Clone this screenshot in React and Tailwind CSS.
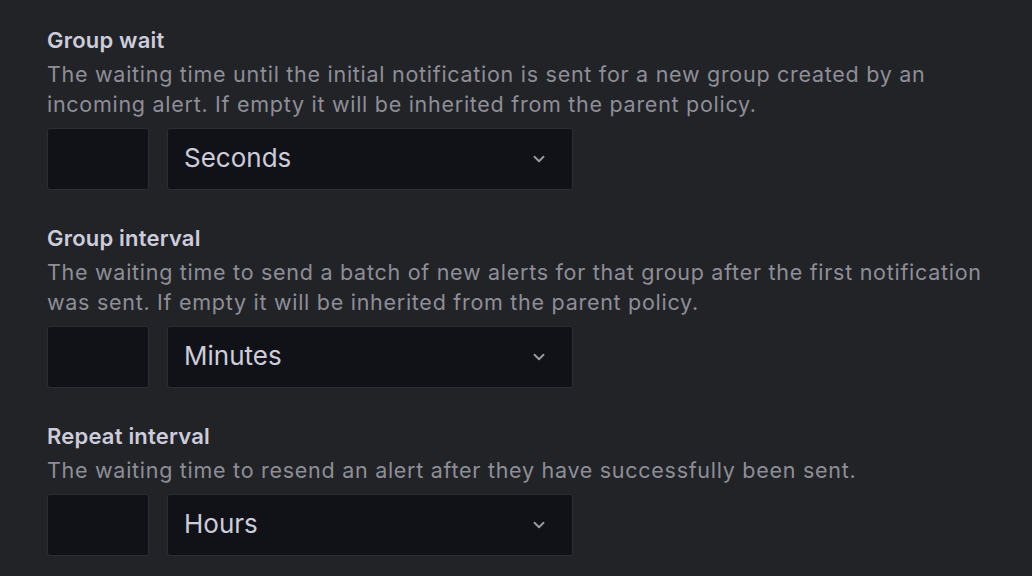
import React from 'react';
import { ChevronDown } from 'lucide-react';

const fields = [
  {
    label: 'Group wait',
    description:
      'The waiting time until the initial notification is sent for a new group created by an incoming alert. If empty it will be inherited from the parent policy.',
    unit: 'Seconds',
  },
  {
    label: 'Group interval',
    description:
      'The waiting time to send a batch of new alerts for that group after the first notification was sent. If empty it will be inherited from the parent policy.',
    unit: 'Minutes',
  },
  {
    label: 'Repeat interval',
    description: 'The waiting time to resend an alert after they have successfully been sent.',
    unit: 'Hours',
  },
];

const TimingField = ({ label, description, unit }) => (
  <div className="flex flex-col">
    <label className="text-[22px] leading-[26px] font-semibold tracking-[0.2px] text-[#ccccdc]">{label}</label>
    <p className="mt-[6px] text-[21.5px] leading-[30px] tracking-[0.72px] text-[#8e8e98]">{description}</p>
    <div className="mt-[9px] flex gap-[18px]">
      <input
        className="w-[102px] h-[62px] rounded-[3px] border border-[#2c2d33] bg-[#111217] outline-none"
        type="text"
      />
      <div className="w-[406px] h-[62px] rounded-[3px] border border-[#2c2d33] bg-[#111217] flex items-center justify-between pl-[16px] pr-[24px]">
        <span className="text-[26px] leading-[30px] mb-[3px] text-[#ccccdc]">{unit}</span>
        <ChevronDown size={18} strokeWidth={2.5} className="text-[#9a9aa5]" />
      </div>
    </div>
  </div>
);

export default function App() {
  return (
    <div
      className="w-[1032px] h-[576px] bg-[#222327] pl-[47px] pt-[27px] overflow-hidden"
      style={{ fontFamily: 'Inter, Roboto, "Liberation Sans", sans-serif' }}
    >
      <div className="w-[960px] flex flex-col gap-[35px]">
        {fields.map((f) => (
          <TimingField key={f.label} {...f} />
        ))}
      </div>
    </div>
  );
}
